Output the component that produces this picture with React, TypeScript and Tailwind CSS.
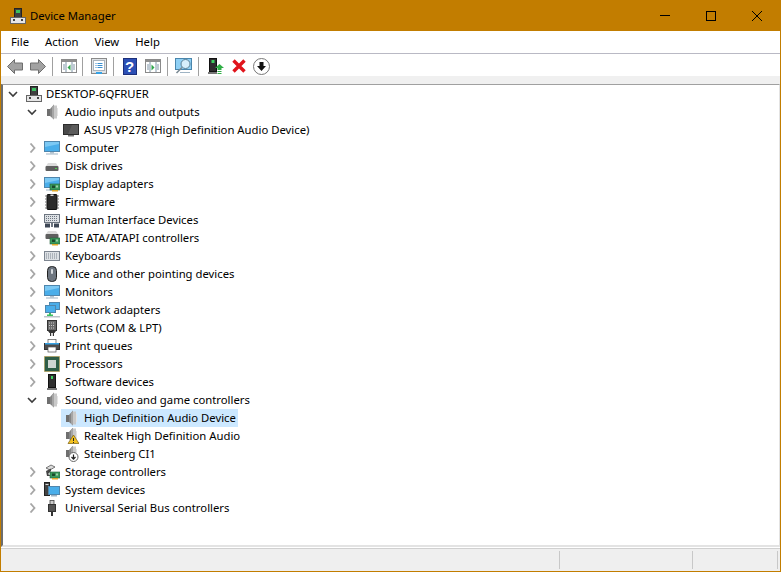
import type { ReactNode } from "react"

const font = "font-['Noto_Sans','Open_Sans',sans-serif]"

function Ico({ children }: { children: ReactNode }) {
  return (
    <svg width={16} height={16} viewBox="0 0 16 16" className="shrink-0">
      {children}
    </svg>
  )
}

function Speaker() {
  return (
    <>
      <rect x="3" y="5" width="3" height="7" fill="#6f6f6f" />
      <path d="M6 5 L10 0.5 V15.5 L6 12 Z" fill="#858585" />
      <path d="M8 3 L10 0.5 V15.5 L8 13.5 Z" fill="#a5a5a5" />
      <rect x="10" y="1.5" width="3" height="13" fill="#c9c9c9" />
      <rect x="13" y="4" width="1" height="8" fill="#e4e4e4" />
    </>
  )
}

function Monitor() {
  return (
    <>
      <rect x="0.5" y="1.5" width="15" height="10" fill="#4aaeea" stroke="#4f86ad" />
      <path d="M1 2 H15 V4 L1 7 Z" fill="#7cc9f4" />
      <rect x="6" y="12" width="4" height="1.5" fill="#b4c4d0" />
      <rect x="2" y="13.5" width="12" height="1" fill="#9fb4c4" />
    </>
  )
}

function Card() {
  return (
    <>
      <rect x="6" y="8" width="10" height="6" fill="#3a9a5c" stroke="#23603a" strokeWidth="0.6" />
      <rect x="8" y="9.5" width="3" height="2.5" fill="#1b4a2c" />
      <rect x="12" y="9.5" width="2" height="2" fill="#9ad0a8" />
      <rect x="8" y="14" width="6" height="1.5" fill="#e0a92c" />
    </>
  )
}

function Tower() {
  return (
    <>
      <rect x="4.5" y="0.5" width="7" height="9" fill="#3f3f3f" stroke="#222" />
      <rect x="6" y="2" width="4" height="3" fill="#3cc060" />
      <rect x="0.5" y="9.5" width="15" height="6" fill="#e6e6e6" stroke="#666" />
      <rect x="3" y="11" width="2" height="2" fill="#444" />
      <rect x="11" y="11" width="2" height="2" fill="#444" />
    </>
  )
}

const icons: Record<string, ReactNode> = {
  desktop: <Tower />,
  speaker: <Speaker />,
  asus: (
    <>
      <rect x="0.5" y="2.5" width="15" height="10" fill="#4a4a4a" stroke="#2c2c2c" />
      <path d="M9 3 H15 V12 H5 Z" fill="#5c5c5c" />
      <rect x="5" y="13" width="6" height="1.5" fill="#777" />
    </>
  ),
  computer: <Monitor />,
  disk: (
    <>
      <path d="M2 8 L4 5 H12 L14 8 Z" fill="#dcdcdc" />
      <rect x="1.5" y="8" width="13" height="5" rx="1" fill="#5f5f5f" />
      <rect x="11" y="10" width="2" height="1" fill="#4fd04f" />
    </>
  ),
  display: (
    <>
      <Monitor />
      <Card />
    </>
  ),
  firmware: (
    <>
      <rect x="3" y="0.5" width="10" height="15" rx="1" fill="#2b2b2b" stroke="#111" />
      <rect x="6.5" y="0.5" width="3" height="1.5" fill="#d0d0d0" />
      <path d="M1 2h2M1 5h2M1 8h2M1 11h2M1 14h2M13 2h2M13 5h2M13 8h2M13 11h2M13 14h2" stroke="#777" strokeWidth="1.2" />
    </>
  ),
  hid: (
    <>
      <rect x="0.5" y="2.5" width="15" height="8" fill="#dde1e5" stroke="#6d7580" />
      <path d="M2 4.5h12M2 6.5h12M2 8.5h12" stroke="#6d7580" strokeDasharray="1 1" />
      <path d="M1 15.5 V11.5 H6 V15.5 Z M10 15.5 V11.5 H15 V15.5 Z" fill="#3e4856" />
      <rect x="7" y="10" width="2" height="5" fill="#6d7580" />
    </>
  ),
  ide: (
    <>
      <path d="M2 4 L4 1 H12 L14 4 Z" fill="#dcdcdc" />
      <rect x="1.5" y="4" width="13" height="5" rx="1" fill="#5f5f5f" />
      <Card />
    </>
  ),
  keyboard: (
    <>
      <rect x="0.5" y="3.5" width="15" height="9" fill="#dde1e5" stroke="#7d8590" />
      <path d="M2 6h12M2 8h12M2 10h12" stroke="#7d8590" strokeDasharray="1 1" />
    </>
  ),
  mouse: (
    <>
      <rect x="3.5" y="0.5" width="9" height="15" rx="4" fill="#6e7680" stroke="#222" />
      <rect x="7" y="3" width="2" height="5" rx="1" fill="#d9dde1" />
    </>
  ),
  monitors: <Monitor />,
  network: (
    <>
      <rect x="5.5" y="0.5" width="10" height="7" fill="#4aaeea" stroke="#4f86ad" />
      <rect x="1.5" y="3.5" width="10" height="7" fill="#4aaeea" stroke="#4f86ad" />
      <rect x="5" y="11" width="2" height="3" fill="#3cc060" />
      <rect x="3" y="12.5" width="6" height="1.5" fill="#3cc060" />
      <rect x="0" y="14" width="16" height="1.5" fill="#bcc4c9" />
    </>
  ),
  ports: (
    <>
      <rect x="3.5" y="0.5" width="9" height="10" fill="#6b6b6b" stroke="#333" />
      <path d="M5 3h6M5 5.5h6M5 8h6" stroke="#ccc" strokeDasharray="1 1" />
      <path d="M4 11 H12 L10.5 13 H5.5 Z" fill="#333" />
      <rect x="6" y="13" width="1.2" height="3" fill="#333" />
      <rect x="8.8" y="13" width="1.2" height="3" fill="#333" />
    </>
  ),
  print: (
    <>
      <rect x="4" y="1.5" width="8" height="4" fill="#fff" stroke="#555" strokeWidth="0.7" />
      <rect x="0.5" y="5.5" width="15" height="6" fill="#4c4c4c" stroke="#333" />
      <rect x="1" y="5" width="14" height="1.5" fill="#35a2e6" />
      <rect x="4" y="9" width="8" height="5" fill="#fff" stroke="#555" strokeWidth="0.7" />
    </>
  ),
  cpu: (
    <>
      <rect x="0.5" y="0.5" width="15" height="15" fill="#2f5d46" stroke="#b8943a" strokeDasharray="1 1" />
      <rect x="1.5" y="1.5" width="13" height="13" fill="#2f5d46" />
      <rect x="4" y="4" width="8" height="8" fill="#d0d6d2" />
    </>
  ),
  software: (
    <>
      <rect x="4.5" y="0.5" width="7" height="13" fill="#2e2e2e" stroke="#111" />
      <rect x="7" y="2" width="2" height="3" fill="#3cd060" />
      <rect x="3" y="14" width="10" height="2" fill="#777" />
    </>
  ),
  hdaudio: <Speaker />,
  realtek: (
    <>
      <g transform="translate(0 -1)">
        <Speaker />
      </g>
      <path d="M10.5 7 L16 15.5 H5 Z" fill="#f3c121" stroke="#7a5e10" strokeWidth="0.7" />
      <rect x="10" y="10" width="1" height="3" fill="#222" />
      <rect x="10" y="14" width="1" height="1" fill="#222" />
    </>
  ),
  steinberg: (
    <>
      <g transform="translate(0 -1)">
        <Speaker />
      </g>
      <circle cx="10.5" cy="11" r="4.5" fill="#fff" stroke="#666" />
      <path d="M10.5 8.5 V13 M8.5 11 L10.5 13.2 L12.5 11" fill="none" stroke="#222" strokeWidth="1.2" />
    </>
  ),
  storage: (
    <>
      <path d="M2 4 L7 1 L11 3 L6 6 Z" fill="#dcdcdc" stroke="#444" strokeWidth="0.7" />
      <path d="M2 7 L7 4.5 V7 L4 10 L7 12 H3 Z" fill="#444" />
      <Card />
    </>
  ),
  system: (
    <>
      <rect x="0.5" y="0.5" width="5" height="13" fill="#444" stroke="#222" />
      <rect x="1.5" y="2" width="3" height="1" fill="#ddd" />
      <rect x="4.5" y="4.5" width="11" height="8" fill="#4aaeea" stroke="#4f86ad" />
      <rect x="7" y="13" width="6" height="1.5" fill="#9fb4c4" />
    </>
  ),
  usb: (
    <>
      <rect x="6" y="0.5" width="4" height="4" fill="#ccc" stroke="#444" strokeWidth="0.8" />
      <rect x="4.5" y="4.5" width="7" height="7" fill="#555" stroke="#333" />
      <rect x="7" y="11" width="2" height="5" fill="#333" />
    </>
  ),
}

type Row = { label: string; icon: string; depth?: number; open?: boolean; selected?: boolean }

const rows: Row[] = [
  { label: "Audio inputs and outputs", icon: "speaker", open: true },
  { label: "ASUS VP278 (High Definition Audio Device)", icon: "asus", depth: 2 },
  { label: "Computer", icon: "computer" },
  { label: "Disk drives", icon: "disk" },
  { label: "Display adapters", icon: "display" },
  { label: "Firmware", icon: "firmware" },
  { label: "Human Interface Devices", icon: "hid" },
  { label: "IDE ATA/ATAPI controllers", icon: "ide" },
  { label: "Keyboards", icon: "keyboard" },
  { label: "Mice and other pointing devices", icon: "mouse" },
  { label: "Monitors", icon: "monitors" },
  { label: "Network adapters", icon: "network" },
  { label: "Ports (COM & LPT)", icon: "ports" },
  { label: "Print queues", icon: "print" },
  { label: "Processors", icon: "cpu" },
  { label: "Software devices", icon: "software" },
  { label: "Sound, video and game controllers", icon: "speaker", open: true },
  { label: "High Definition Audio Device", icon: "hdaudio", depth: 2, selected: true },
  { label: "Realtek High Definition Audio", icon: "realtek", depth: 2 },
  { label: "Steinberg CI1", icon: "steinberg", depth: 2 },
  { label: "Storage controllers", icon: "storage" },
  { label: "System devices", icon: "system" },
  { label: "Universal Serial Bus controllers", icon: "usb" },
]

function Chevron({ open }: { open?: boolean }) {
  return (
    <span className="flex w-[16px] justify-center">
      {open ? (
        <svg width="10" height="10" viewBox="0 0 10 10">
          <path d="M1 3 L5 7 L9 3" fill="none" stroke="#3c3c3c" strokeWidth="1.6" />
        </svg>
      ) : (
        <svg width="10" height="10" viewBox="0 0 10 10">
          <path d="M3.5 0.5 L7.5 5 L3.5 9.5" fill="none" stroke="#a6a6a6" strokeWidth="1.8" />
        </svg>
      )}
    </span>
  )
}

function TreeRow({ row }: { row: Row }) {
  if (row.depth === 2) {
    return (
      <div className="flex h-[18px] items-center pl-[58px]">
        <div className={`flex h-[18px] items-center gap-[5px] pl-[2px] pr-[2px] ${row.selected ? "bg-[#cce8ff]" : ""}`}>
          <Ico>{icons[row.icon]}</Ico>
          <span>{row.label}</span>
        </div>
      </div>
    )
  }
  return (
    <div className="flex h-[18px] items-center pl-[21px]">
      <Chevron open={row.open} />
      <span className="ml-[4px] mr-[5px]">
        <Ico>{icons[row.icon]}</Ico>
      </span>
      <span>{row.label}</span>
    </div>
  )
}

function Sep({ left = 3 }: { left?: number }) {
  return <div className={`h-[19px] w-px bg-[#a0a0a0] mr-[4px] ${left === 2 ? "ml-[2px]" : "ml-[3px]"}`} />
}

function Tool({ children }: { children: ReactNode }) {
  return <div className="flex h-[22px] w-[23px] items-center justify-center">{children}</div>
}

function PaneIcon({ back }: { back?: boolean }) {
  return (
    <svg width="16" height="14" viewBox="0 0 16 14">
      <rect x="0.5" y="0.5" width="15" height="13" fill="#fff" stroke="#8a8a8a" />
      <rect x="1" y="1" width="14" height="2" fill="#8e8e8e" />
      <path d="M5 3 V13 M11 3 V13 M2 6h2M2 8h2M2 10h2M12 6h2M12 8h2M12 10h2" stroke="#7f95a8" />
      {back ? <path d="M9.5 5.5 L6.5 8.5 L9.5 11.5 Z" fill="#2fa64a" /> : <path d="M6.5 5.5 L9.5 8.5 L6.5 11.5 Z" fill="#2fa64a" />}
    </svg>
  )
}

function Toolbar() {
  return (
    <div className="flex h-[22px] shrink-0 items-center pl-[2px] pt-[2px]">
      <Tool>
        <svg width="16" height="15" viewBox="0 0 16 15">
          <path d="M0.5 7.5 L7.5 0.5 V4 H15.5 V11 H7.5 V14.5 Z" fill="#a2a2a2" stroke="#6e6e6e" />
        </svg>
      </Tool>
      <Tool>
        <svg width="16" height="15" viewBox="0 0 16 15">
          <path d="M15.5 7.5 L8.5 0.5 V4 H0.5 V11 H8.5 V14.5 Z" fill="#a2a2a2" stroke="#6e6e6e" />
        </svg>
      </Tool>
      <Sep />
      <Tool>
        <PaneIcon back />
      </Tool>
      <Sep left={2} />
      <Tool>
        <svg width="16" height="16" viewBox="0 0 16 16">
          <rect x="0.5" y="0.5" width="15" height="15" fill="#dfe3e7" stroke="#8a8a8a" />
          <rect x="2.5" y="2.5" width="11" height="10" fill="#fff" stroke="#aab4bd" />
          <path d="M4.5 5.5h1M6.5 5.5h5M4.5 7.5h1M6.5 7.5h5M4.5 9.5h1M6.5 9.5h5" stroke="#3a8fd0" />
          <rect x="5" y="14" width="6" height="2" fill="#35a2e6" />
        </svg>
      </Tool>
      <Sep />
      <Tool>
        <div className="flex h-[17px] w-[14px] items-center justify-center border border-[#1c2f7a] bg-[#2c4fb5] font-['Liberation_Sans',sans-serif] text-[15px] leading-none font-bold text-white">
          ?
        </div>
      </Tool>
      <Tool>
        <PaneIcon />
      </Tool>
      <Sep />
      <Tool>
        <svg width="17" height="16" viewBox="0 0 17 16">
          <rect x="0.5" y="0.5" width="16" height="11" fill="#8fd0f5" stroke="#4a86ad" />
          <circle cx="10.5" cy="6" r="4.5" fill="#d6eefb" stroke="#5b7f94" />
          <path d="M7 9.5 L1.5 15" stroke="#7a8a94" strokeWidth="1.6" />
          <path d="M5 14.5 H15" stroke="#9fb4c4" />
        </svg>
      </Tool>
      <Sep />
      <div className="w-px" />
      <Tool>
        <svg width="16" height="16" viewBox="0 0 16 16">
          <rect x="1.5" y="0.5" width="7" height="13" fill="#2e2e2e" stroke="#111" />
          <rect x="3.5" y="2" width="3" height="3" fill="#3cd060" />
          <rect x="0" y="14" width="9" height="2" fill="#777" />
          <path d="M11.5 6 L16 10 H13.5 V12 H9.5 V10 H7 Z" fill="#2fae45" />
          <path d="M9.5 13.5h4M9.5 15.5h4" stroke="#2fae45" />
        </svg>
      </Tool>
      <Tool>
        <svg width="14" height="14" viewBox="0 0 14 14">
          <path d="M1.5 1.5 L12.5 12.5 M12.5 1.5 L1.5 12.5" stroke="#e0141c" strokeWidth="3.4" />
        </svg>
      </Tool>
      <Tool>
        <svg width="17" height="17" viewBox="0 0 17 17">
          <circle cx="8.5" cy="8.5" r="8" fill="#fff" stroke="#777" />
          <path d="M6.5 4 H10.5 V8 H13 L8.5 13 L4 8 H6.5 Z" fill="#111" />
        </svg>
      </Tool>
    </div>
  )
}

export default function App() {
  return (
    <div className={`flex h-[572px] w-[781px] flex-col overflow-hidden border border-[#c27d00] bg-white text-[11.3px] text-black ${font}`}>
      <div className="flex h-[30px] shrink-0 items-center bg-[#c27d00]">
        <span className="ml-[9px] mr-[4px]">
          <Ico>{icons.desktop}</Ico>
        </span>
        <span>Device Manager</span>
        <div className="ml-auto flex pb-[1px]">
          <div className="flex h-[29px] w-[46px] items-center justify-center">
            <div className="h-px w-[10px] bg-black" />
          </div>
          <div className="flex h-[29px] w-[46px] items-center justify-center">
            <div className="h-[10px] w-[10px] border border-black" />
          </div>
          <div className="flex h-[29px] w-[46px] items-center justify-center">
            <svg width="10" height="10" viewBox="0 0 10 10">
              <path d="M0 0 L10 10 M10 0 L0 10" stroke="#000" />
            </svg>
          </div>
        </div>
      </div>
      <div className="flex h-[23px] shrink-0 items-center gap-[16px] border-b border-[#b9b9c4] pl-[10px]">
        <span>File</span>
        <span>Action</span>
        <span>View</span>
        <span>Help</span>
      </div>
      <Toolbar />
      <div className="h-[8px] shrink-0 bg-[#f0f0f0]" />
      <div className="min-h-0 flex-1 overflow-hidden border-t border-r border-b-2 border-l-2 border-t-[#a0a0a0] border-r-[#e3e3e3] border-b-[#e3e3e3] border-l-[#6d6d6d]">
        <div className="flex h-[18px] items-center pl-[2px]">
          <Chevron open />
          <span className="ml-[5px] mr-[4px]">
            <Ico>{icons.desktop}</Ico>
          </span>
          <span>DESKTOP-6QFRUER</span>
        </div>
        {rows.map((r) => (
          <TreeRow key={r.label} row={r} />
        ))}
      </div>
      <div className="mt-px flex h-[23px] shrink-0 border-t border-[#d0d0d0] bg-[#efefef] py-[2px]">
        <div className="flex-1" />
        <div className="w-[133px] border-l border-[#c8c8c8]" />
        <div className="w-[85px] border-l border-[#c8c8c8]" />
        <div className="w-[3px] border-l border-[#c8c8c8]" />
      </div>
    </div>
  )
}
